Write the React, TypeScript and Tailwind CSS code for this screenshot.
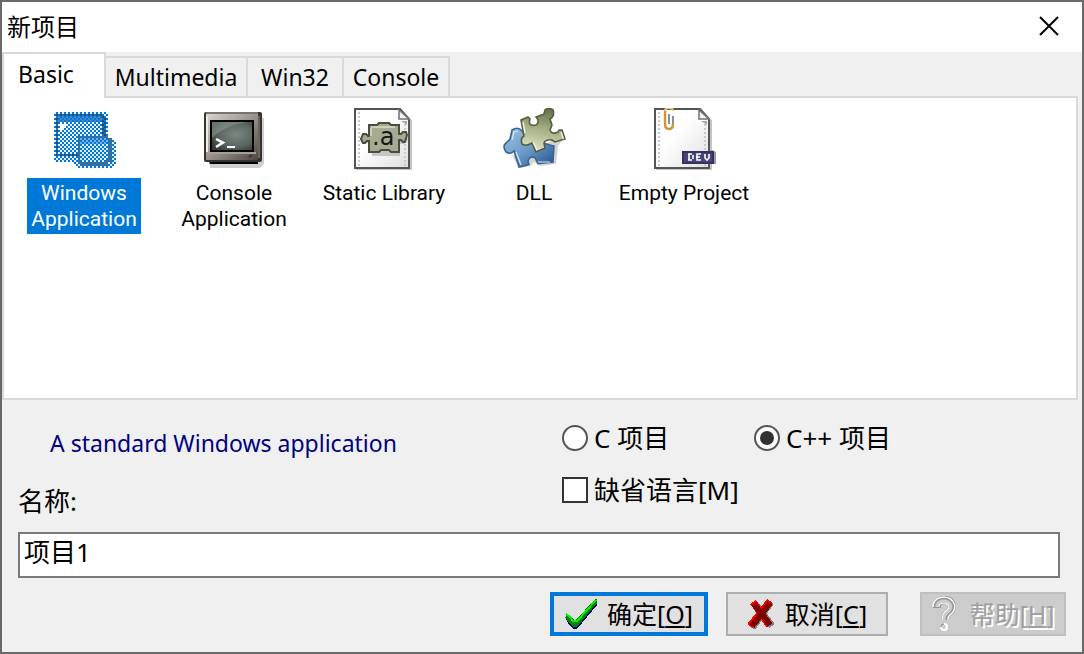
import React, { useState } from 'react';

type Template = {
  id: string;
  name: string;
  description: string;
  icon: React.ReactNode;
};

const iconProps = { className: 'size-16', viewBox: '0 0 32 32', 'aria-hidden': true };

const WindowsIcon = () => (
  <svg {...iconProps} shapeRendering="crispEdges">
    <defs>
      <pattern id="dither" width="2" height="2" patternUnits="userSpaceOnUse">
        <rect width="1" height="1" fill="#0078d7" />
        <rect x="1" y="1" width="1" height="1" fill="#0078d7" />
      </pattern>
      <linearGradient id="glass" x1="0" y1="0" x2="1" y2="1">
        <stop offset="0" stopColor="#fff" />
        <stop offset="1" stopColor="#d5e8fa" />
      </linearGradient>
    </defs>
    <path d="M1 2h26v1h1v12h2v1h1v1h1v11h-1v1h-1v1H13v-1h-1v-1h-1v-1H2v-1H1z" fill="#e8eef5" />
    <path d="M2 3h24v1h1v11H14v1h-1v8H2z" fill="#3c4654" />
    <path d="M3 5h22v9H13v9H3z" fill="url(#glass)" />
    <path d="M3 4h22v3H3z" fill="#4487c8" />
    <path d="M13 14h15v1h2v12h-2v2H14v-1h-1z" fill="#66666b" />
    <path d="M14 15h14v11h-1v1H14z" fill="#dbeaf8" />
    <path d="M14 15h14v3H14z" fill="#7baede" />
    <path d="M1 2h26v1h1v12h2v1h1v1h1v11h-1v1h-1v1H13v-1h-1v-1h-1v-1H2v-1H1z" fill="url(#dither)" />
    <path d="M4 8h3v2H6v1H5v1H4zM26 25h1v1h-1z" fill="#fff" />
  </svg>
);

const ConsoleIcon = () => (
  <svg {...iconProps}>
    <defs>
      <linearGradient id="case" x1="0" y1="0" x2="1" y2="1">
        <stop offset="0" stopColor="#d8d4cb" />
        <stop offset="0.5" stopColor="#98938a" />
        <stop offset="1" stopColor="#4d4740" />
      </linearGradient>
      <radialGradient id="tube" cx="0.6" cy="0.45" r="0.7">
        <stop offset="0" stopColor="#7b8882" />
        <stop offset="0.6" stopColor="#5c6762" />
        <stop offset="1" stopColor="#343d39" />
      </radialGradient>
    </defs>
    <path d="M3 5h28v23l-2 2H4z" fill="#cfcfcf" />
    <path d="M3 26h25v2H4z" fill="#000" />
    <rect x="1" y="2" width="29" height="25" rx="1" fill="#38332f" />
    <path d="M2 2h26v1H2z" fill="#77736e" />
    <path d="M2 3h26v23H2z" fill="url(#case)" />
    <path d="M2 4h1v18H2z" fill="#f0eee8" />
    <path d="M28 4h1v21h-1z" fill="#6a645d" />
    <path d="M4 6h22v16H4z" fill="#050505" />
    <path d="M5 7h20v14H5z" fill="url(#tube)" />
    <path d="M5 7h17Q11 9 5 15z" fill="#909b96" opacity=".55" />
    <path d="M3 22h24v1H3z" fill="#a49e95" />
    <path d="M7 15.500l3.500 1.800L7 19.500" fill="none" stroke="#fff" strokeWidth="1.200" />
    <path d="M12.500 19.500h4" stroke="#fff" />
    <path d="M23.500 24.500l1.500-1" stroke="#38332f" />
  </svg>
);

const Page = () => (
  <>
    <defs>
      <linearGradient id="paper" x1="0" y1="0" x2="1" y2="1">
        <stop offset="0" stopColor="#fff" />
        <stop offset="0.4" stopColor="#fff" />
        <stop offset="1" stopColor="#dedede" />
      </linearGradient>
    </defs>
    <path d="M2 6h28v25H2z" fill="#c4c4c4" />
    <path d="M1.500 .5H24L28.500 5.500v24.500h-27z" fill="url(#paper)" stroke="#555" />
    <path d="M3.500 2v27M26.500 8v21" stroke="#cacaca" strokeDasharray="1 1" />
    <path d="M23.500 1v4.500h5z" fill="#f3f3f3" stroke="#777" strokeWidth=".8" />
    <path d="M24.500 6.500h3v2z" fill="#aaa" />
  </>
);

const LibraryIcon = () => (
  <svg {...iconProps}>
    <Page />
    <path d="M10 9h14v4h3l1 3-2 2h-2v6H10v-6l-4-1z" fill="#9a9a92" opacity=".5" />
    <path
      d="M8.500 8.500h4l1-1h5l1 1h4v4.500h1l1-1h1.500l.5 1.500-1 3.500h-1l-1-1h-1V22h-4l-1-1h-4l-1 1h-5v-5.500h-1l-1 1H5.500l-1-2 1-2.500h1.500l1 1h.5z"
      fill="#a4ab91"
      stroke="#484d3f"
    />
    <path d="M9.500 9.500h12M9.500 10v4" stroke="#cbd0b9" fill="none" />
    <text x="10" y="18.500" fontSize="12" fontFamily="DejaVu Sans, sans-serif" fill="#171717">
      .a
    </text>
  </svg>
);

const PuzzleIcon = () => (
  <svg {...iconProps}>
    <defs>
      <linearGradient id="olive" x1="0.6" y1="0" x2="0.4" y2="1">
        <stop offset="0" stopColor="#66704a" />
        <stop offset="0.5" stopColor="#a8b187" />
        <stop offset="1" stopColor="#e0e5c8" />
      </linearGradient>
      <linearGradient id="blue" x1="0" y1="0" x2="1" y2="1">
        <stop offset="0" stopColor="#9cc4e5" />
        <stop offset="0.5" stopColor="#6c9bc8" />
        <stop offset="1" stopColor="#244f8e" />
      </linearGradient>
    </defs>
    <path d="M5 24l4 6 5-1 2-2 3 2 8-1 1-9 3-4-1-3-4 3-7 6z" fill="#b5b5b5" opacity=".6" />
    <path
      d="M4 15.500L5 11q3-2 5 .5l4 4 10 3 2 .5-.5 8-7.500.8-1.500-3q-3-1-3.500 2l.5 1.500-5 1.200-2.500-8q-2 2-4 .5-2-3 0-4.500z"
      fill="url(#blue)"
      stroke="#3c6591"
      strokeWidth=".8"
    />
    <path d="M5 16l1-4 2-.5M7 22l2.500 6.500M18 27h6" fill="none" stroke="#d5eafb" strokeWidth=".6" />
    <path
      d="M9.500 6l3.500-1.500 1 1q-1 3 1.500 3.200 3 0 2.500-3l-1-1.200L21 3l.5-2q2-1.500 4 0 1 3-1.500 4.500l1 3-1 2.500q1 2.500 4 1l.5-1 1.500 0 1.500 4.500-5 1.500-1.500-1q-3-.5-4 1.500l.5 2.500-4.500 2-2-4.500q-3 2-5 .5-1-3 1-4z"
      fill="url(#olive)"
      stroke="#555e40"
      strokeWidth=".8"
    />
    <path d="M10.500 7l1 5.500M15.500 17l2 4M29.500 12l1.200 3.500" fill="none" stroke="#f0f3df" strokeWidth=".7" />
  </svg>
);

const EmptyIcon = () => (
  <svg {...iconProps}>
    <Page />
    <path d="M6.500 1.500q0-1.500 2-1.500t2 1.500" fill="none" stroke="#e9c474" />
    <path d="M6.500 1.500V8q0 2.500 2 2.500t2-2.500" fill="none" stroke="#cf962c" strokeWidth="1.200" />
    <path d="M8.500 3v5M10.500 4v4" stroke="#8d8d96" />
    <path d="M17 28h15v-6l-2-1z" fill="#9a9a9a" />
    <path d="M15.500 22h15v5.500h-15z" fill="#474478" stroke="#353260" />
    <path
      d="M18 23h2M18 26h2M18.500 23v3M20.500 23.500v2M24.500 23h-2v3h2M22 24.500h2M26.500 23v2l1 1 1-1v-2"
      fill="none"
      stroke="#fff"
      strokeWidth=".8"
    />
  </svg>
);

const CheckIcon = () => (
  <svg className="h-[30px] w-8" viewBox="0 0 16 15" shapeRendering="crispEdges" aria-hidden="true">
    <path d="M0 9l1-1 2 1 2 2L15 0h1v3L6 15H4L2 13z" fill="#000080" />
    <path d="M0 9l1-1 2 1 2 2L15 0h1v2L6 14H4L2 12z" fill="#008000" />
    <path d="M.5 7.500L2.500 9l1.500 2h2L15.500 .5" fill="none" stroke="#00f000" />
  </svg>
);

const CrossIcon = () => (
  <svg className="h-[30px] w-7" viewBox="0 0 14 15" shapeRendering="crispEdges" aria-hidden="true">
    <path d="M2.500 14.500L12 1.500M4 2.500l8.500 11" stroke="#808080" strokeWidth="3.500" />
    <path d="M1.500 13.500L11.500 1M3 1.500L11 13" stroke="#ff0000" strokeWidth="3.500" />
    <path d="M2.500 13.500L11.500 2M3.500 2.500l8 10.500" stroke="#800000" strokeWidth="3" />
  </svg>
);

const HelpIcon = () => (
  <svg className="h-9 w-6" viewBox="0 0 12 18" aria-hidden="true">
    <path d="M2.500 6V4.500Q3.500 2 6.500 2T10 5q0 2-2 3.500-1.500 1-1.500 3.500" fill="none" stroke="#999" strokeWidth="4" />
    <path d="M2 5.500V4.500Q3 2 6 2t4 3q0 2-2 3.500-1.500 1-1.500 3.500" fill="none" stroke="#fff" strokeWidth="3.500" />
    <path d="M2 5.500V4.500Q3 2 6 2t4 3q0 2-2 3.500-1.500 1-1.500 3.500" fill="none" stroke="#999" strokeWidth="2.200" />
    <path d="M2.500 5.500V4.500Q3.500 2.500 6 2.500t3.500 2.500q0 2-2 3.500Q6 9.500 6 12" fill="none" stroke="#ccc" strokeWidth="1.400" />
    <circle cx="6" cy="15.500" r="1.500" fill="#ccc" stroke="#fff" />
    <path d="M4.500 15.500q0-1.500 1.500-1.500" fill="none" stroke="#999" strokeWidth=".8" />
  </svg>
);

const tabs = [
  { name: 'Basic', width: 'w-[104px]' },
  { name: 'Multimedia', width: 'w-[142px]' },
  { name: 'Win32', width: 'w-[96px]' },
  { name: 'Console', width: 'w-[106px]' },
];

const templates: Template[] = [
  { id: 'win', name: 'Windows Application', description: 'A standard Windows application', icon: <WindowsIcon /> },
  { id: 'console', name: 'Console Application', description: 'A console application', icon: <ConsoleIcon /> },
  { id: 'static', name: 'Static Library', description: 'A static library', icon: <LibraryIcon /> },
  { id: 'dll', name: 'DLL', description: 'A dynamic link library', icon: <PuzzleIcon /> },
  { id: 'empty', name: 'Empty Project', description: 'An empty project', icon: <EmptyIcon /> },
];

const radioClass =
  "flex size-[26px] shrink-0 appearance-none items-center justify-center rounded-full border-2 border-[#555] bg-white checked:before:size-[14px] checked:before:rounded-full checked:before:bg-[#333] checked:before:content-['']";

export default function App() {
  const [tab, setTab] = useState('Basic');
  const [selected, setSelected] = useState('win');
  const [language, setLanguage] = useState('cpp');
  const [name, setName] = useState('项目1');

  const current = templates.find((t) => t.id === selected);

  return (
    <div className="flex min-h-screen flex-col border-2 border-[#696969] bg-[#f0f0f0] font-['Noto_Sans','Noto_Sans_CJK_SC',sans-serif] text-black">
      <header className="flex h-[50px] items-center justify-between bg-white pr-[22px] pl-[5px]">
        <h1 className="text-[24px] leading-8">新项目</h1>
        <button type="button" aria-label="关闭" className="size-[22px]">
          <svg viewBox="0 0 22 22" aria-hidden="true">
            <path d="M2 1l18 18M20 1L2 19" stroke="#000" strokeWidth="2" />
          </svg>
        </button>
      </header>

      <div role="tablist" className="flex h-11 items-end text-[23px] leading-8">
        {tabs.map((t) => (
          <button
            key={t.name}
            type="button"
            role="tab"
            aria-selected={t.name === tab}
            onClick={() => setTab(t.name)}
            className={`${t.width} border-[#d9d9d9] ${
              t.name === tab
                ? 'z-10 -mb-[2px] h-[46px] border-x-2 border-t-2 bg-white pr-4 pb-1'
                : 'h-10 border-t-2 border-r-2'
            }`}
          >
            {t.name}
          </button>
        ))}
      </div>

      <main className="mr-1 flex min-h-[304px] flex-1 flex-wrap content-start items-start border-2 border-[#d9d9d9] bg-white px-[5px] pt-[10px]">
        {templates.map((t) => (
          <button
            key={t.id}
            type="button"
            aria-pressed={t.id === selected}
            onClick={() => setSelected(t.id)}
            className="flex w-[150px] flex-col items-center gap-[6px]"
          >
            {t.icon}
            <span
              className={`px-1 py-[2px] font-['Roboto',sans-serif] text-[21px] leading-[26px] ${
                t.id === selected ? 'bg-[#0078d7] text-white' : ''
              } ${t.name.endsWith('Application') ? 'w-min' : 'whitespace-nowrap'}`}
            >
              {t.name}
            </span>
          </button>
        ))}
      </main>

      <form className="pt-3 pb-4 pl-4 text-[26px] leading-8" onSubmit={(e) => e.preventDefault()}>
        <div className="mr-[22px] grid grid-cols-2">
          <div className="flex flex-col">
            <p className="flex h-[62px] items-center pl-8 text-[23px] text-[#000080]">{current?.description}</p>
            <label htmlFor="name" className="flex h-[58px] items-center pb-1">
              名称:
            </label>
          </div>
          <div className="pl-[23px]">
            <div className="flex h-[52px] items-center">
              <label className="flex w-48 items-center gap-[6px]">
                <input type="radio" name="language" checked={language === 'c'} onChange={() => setLanguage('c')} className={radioClass} />
                C 项目
              </label>
              <label className="flex items-center gap-[6px]">
                <input type="radio" name="language" checked={language === 'cpp'} onChange={() => setLanguage('cpp')} className={radioClass} />
                C++ 项目
              </label>
            </div>
            <label className="flex h-[52px] w-fit items-center gap-[6px]">
              <input type="checkbox" className="size-[26px] appearance-none border-2 border-[#333] bg-white checked:bg-[#333]" />
              缺省语言[M]
            </label>
          </div>
        </div>

        <div className="mr-[22px]">
          <input
            id="name"
            type="text"
            value={name}
            onChange={(e) => setName(e.target.value)}
            className="block h-[46px] w-full border-2 border-[#7a7a7a] bg-white px-1 pb-2 outline-none"
          />
        </div>

        <div className="mt-[14px] mr-4 flex justify-end text-[25px]">
          <button type="submit" className="flex h-11 w-[158px] items-center justify-center gap-[10px] border-4 border-[#0078d7] bg-[#e1e1e1]">
            <CheckIcon />
            <span>
              确定[<u>O</u>]
            </span>
          </button>
          <button type="button" className="ml-[18px] flex h-11 w-[162px] items-center justify-center gap-[10px] border-2 border-[#adadad] bg-[#e1e1e1]">
            <CrossIcon />
            <span>
              取消[<u>C</u>]
            </span>
          </button>
          <button
            type="button"
            disabled
            className="ml-8 flex h-11 w-[146px] items-center justify-center gap-[14px] border-2 border-[#bfbfbf] bg-[#ccc] text-[#a0a0a0] text-shadow-[2px_2px_0_#fff]"
          >
            <HelpIcon />
            <span>
              帮助[<u>H</u>]
            </span>
          </button>
        </div>
      </form>
    </div>
  );
}
